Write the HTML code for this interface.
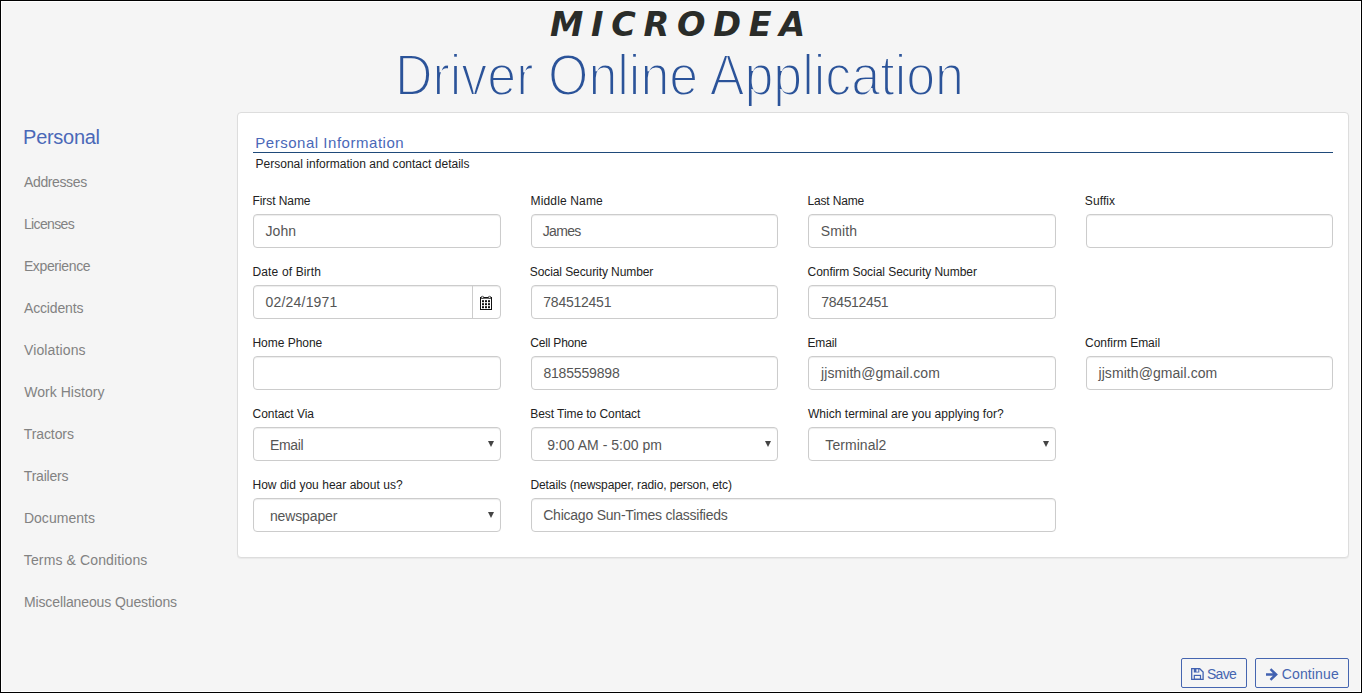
<!DOCTYPE html>
<html lang="en">
<head>
<meta charset="utf-8">
<title>Driver Online Application</title>
<style>
*{box-sizing:border-box}
html,body{margin:0;padding:0}
body{width:1362px;height:693px;overflow:hidden;position:relative;background:#f5f5f5;font-family:"Liberation Sans",sans-serif;color:#222}
.frame{position:absolute;left:0;top:0;width:1362px;height:693px;border:1px solid #000;box-shadow:inset 0 0 0 1px #fff;pointer-events:none;z-index:10}
.t{position:absolute;white-space:nowrap;line-height:1;display:block}
.logo{left:550px;top:7.5px;font-family:"DejaVu Sans","Liberation Sans",sans-serif;font-size:33.5px;font-weight:700;font-style:italic;letter-spacing:7.7px;color:#2a2c29}
.title{left:395.4px;top:48px;font-size:56.5px;color:#2b5399;-webkit-text-stroke:2px #f5f5f5;transform-origin:0 0;transform:scaleX(.9197)}
.nav{font-size:14px;color:#828282}
.nav.act{font-size:20px;color:#4a68b8}
.panel{position:absolute;left:237px;top:112px;width:1112px;height:446px;background:#fff;border:1px solid #ddd;border-radius:4px;box-shadow:0 1px 1px rgba(0,0,0,.05)}
.hr{position:absolute;left:253px;top:152px;width:1080px;height:1px;background:#1f4a7a}
.h{font-size:15px;color:#4a68b8}
.sub{font-size:12px;color:#222}
.lb{font-size:12px;color:#222}
.in{position:absolute;height:34px;background:#fff;border:1px solid #ccc;border-radius:4px;box-shadow:inset 0 1px 1px rgba(0,0,0,.075)}
.c1{left:253px;width:248px}.c2{left:531px;width:247px}.c3{left:808px;width:248px}.c4{left:1086px;width:247px}
.r1{top:214px}.r2{top:285px}.r3{top:356px}.r4{top:427px}.r5{top:498px}
.v{font-size:14px;color:#555}
.arr{position:absolute;width:0;height:0;border-left:3.5px solid transparent;border-right:3.5px solid transparent;border-top:6px solid #444}
.btn{position:absolute;top:658px;height:30px;border:1px solid #4565b0;border-radius:2px;background:#f5f5f5}
.bt{font-size:14px;color:#4565b0}
.ic{position:absolute;overflow:visible}
</style>
</head>
<body>
<div class="t logo" id="logo">MICRODEA</div>
<div class="t title" id="title">Driver Online Application</div>

<div class="panel"></div>
<div class="hr"></div>

<div class="in c1 r1"></div><div class="in c2 r1"></div><div class="in c3 r1"></div><div class="in c4 r1"></div>
<div class="in c1 r2"></div><div class="in c2 r2"></div><div class="in c3 r2"></div>
<div class="in c1 r3"></div><div class="in c2 r3"></div><div class="in c3 r3"></div><div class="in c4 r3"></div>
<div class="in c1 r4"></div><div class="in c2 r4"></div><div class="in c3 r4"></div>
<div class="in c1 r5"></div><div class="in c2 r5" style="width:525px"></div>

<!-- calendar addon -->
<div style="position:absolute;left:472px;top:286px;width:1px;height:32px;background:#ccc"></div>
<svg class="ic" style="left:480px;top:296px" width="13" height="15" viewBox="0 0 13 15">
<rect x="0.5" y="1.5" width="11" height="12" fill="#fff" stroke="#111" stroke-width="1"/>
<rect x="0.5" y="1" width="11" height="1.6" fill="#111"/>
<ellipse cx="2.4" cy="1.3" rx="1.3" ry="1" fill="#fff" stroke="#111" stroke-width=".7"/>
<ellipse cx="9.6" cy="1.3" rx="1.3" ry="1" fill="#fff" stroke="#111" stroke-width=".7"/>
<g fill="#111">
<rect x="2" y="4.2" width="2" height="2"/><rect x="5" y="4.2" width="2" height="2"/><rect x="8" y="4.2" width="2" height="2"/>
<rect x="2" y="7.2" width="2" height="2"/><rect x="5" y="7.2" width="2" height="2"/><rect x="8" y="7.2" width="2" height="2"/>
<rect x="2" y="10.2" width="2" height="2"/><rect x="5" y="10.2" width="2" height="2"/><rect x="8" y="10.2" width="2" height="2"/>
</g>
</svg>

<!-- select arrows -->
<div class="arr" style="left:487.5px;top:441px"></div>
<div class="arr" style="left:765px;top:441px"></div>
<div class="arr" style="left:1042.5px;top:441px"></div>
<div class="arr" style="left:487.5px;top:512px"></div>

<div class="btn" style="left:1181px;width:66px"></div>
<div class="btn" style="left:1255px;width:94px"></div>
<!-- floppy icon -->
<svg class="ic" style="left:1191.4px;top:668px" width="13" height="12" viewBox="0 0 13 12">
<path d="M0.7 0.7H8.7L12.1 4.1V11.3H0.7Z" fill="none" stroke="#4161b1" stroke-width="1.3" stroke-linejoin="miter"/>
<rect x="2.8" y="0.7" width="5.5" height="3.8" fill="#4161b1"/>
<rect x="5.4" y="1.3" width="1.9" height="2.4" fill="#f5f5f5"/>
<rect x="3.3" y="7.4" width="6.2" height="3.9" fill="none" stroke="#4161b1" stroke-width="1.2"/>
</svg>
<!-- arrow icon -->
<svg class="ic" style="left:1266px;top:668px" width="12" height="13" viewBox="0 0 12 13">
<path d="M0 5.2H6.9L3.7 2L5.3 0.2L11.9 6.45L5.3 12.7L3.7 10.9L6.9 7.7H0Z" fill="#4161b1"/>
</svg>

<div class="t nav act" id="n0" style="left:23.09px;top:127.00px;letter-spacing:-0.279px">Personal</div>
<div class="t nav" id="n1" style="left:24.03px;top:175.00px;letter-spacing:-0.375px">Addresses</div>
<div class="t nav" id="n2" style="left:23.91px;top:217.00px;letter-spacing:-0.630px">Licenses</div>
<div class="t nav" id="n3" style="left:23.91px;top:259.00px;letter-spacing:-0.374px">Experience</div>
<div class="t nav" id="n4" style="left:24.03px;top:301.00px;letter-spacing:-0.162px">Accidents</div>
<div class="t nav" id="n5" style="left:24.00px;top:343.00px;letter-spacing:0.124px">Violations</div>
<div class="t nav" id="n6" style="left:24.13px;top:385.00px;letter-spacing:0.049px">Work History</div>
<div class="t nav" id="n7" style="left:23.83px;top:427.00px;letter-spacing:-0.109px">Tractors</div>
<div class="t nav" id="n8" style="left:23.83px;top:469.00px;letter-spacing:-0.203px">Trailers</div>
<div class="t nav" id="n9" style="left:23.91px;top:511.00px;letter-spacing:0.025px">Documents</div>
<div class="t nav" id="n10" style="left:23.83px;top:553.00px;letter-spacing:0.125px">Terms &amp; Conditions</div>
<div class="t nav" id="n11" style="left:23.91px;top:595.00px;letter-spacing:-0.111px">Miscellaneous Questions</div>
<div class="t h" id="h" style="left:255.29px;top:135.00px;letter-spacing:0.524px">Personal Information</div>
<div class="t sub" id="sub" style="left:255.48px;top:158.00px;letter-spacing:0.016px">Personal information and contact details</div>
<div class="t lb" id="l11" style="left:252.48px;top:195.00px;letter-spacing:-0.068px">First Name</div>
<div class="t lb" id="l12" style="left:530.48px;top:195.00px;letter-spacing:0.162px">Middle Name</div>
<div class="t lb" id="l13" style="left:807.48px;top:195.00px;letter-spacing:-0.153px">Last Name</div>
<div class="t lb" id="l14" style="left:1084.80px;top:195.00px;letter-spacing:0.098px">Suffix</div>
<div class="t v" id="v11" style="left:265.40px;top:224.00px;letter-spacing:0.127px">John</div>
<div class="t v" id="v12" style="left:542.76px;top:224.00px;letter-spacing:-0.685px">James</div>
<div class="t v" id="v13" style="left:820.68px;top:224.00px;letter-spacing:0.145px">Smith</div>
<div class="t lb" id="l21" style="left:252.48px;top:266.00px;letter-spacing:0.146px">Date of Birth</div>
<div class="t lb" id="l22" style="left:529.80px;top:266.00px;letter-spacing:-0.088px">Social Security Number</div>
<div class="t lb" id="l23" style="left:807.55px;top:266.00px;letter-spacing:-0.047px">Confirm Social Security Number</div>
<div class="t v" id="v21" style="left:265.45px;top:295.00px;letter-spacing:0.211px">02/24/1971</div>
<div class="t v" id="v22" style="left:543.33px;top:295.00px;letter-spacing:-0.247px">784512451</div>
<div class="t v" id="v23" style="left:821.33px;top:295.00px;letter-spacing:-0.344px">784512451</div>
<div class="t lb" id="l31" style="left:252.48px;top:337.00px;letter-spacing:-0.026px">Home Phone</div>
<div class="t lb" id="l32" style="left:530.32px;top:337.00px;letter-spacing:-0.196px">Cell Phone</div>
<div class="t lb" id="l33" style="left:807.48px;top:337.00px;letter-spacing:-0.138px">Email</div>
<div class="t lb" id="l34" style="left:1085.08px;top:337.00px;letter-spacing:-0.030px">Confirm Email</div>
<div class="t v" id="v32" style="left:543.38px;top:366.00px;letter-spacing:-0.167px">8185559898</div>
<div class="t v" id="v33" style="left:821.06px;top:366.00px;letter-spacing:0.070px">jjsmith@gmail.com</div>
<div class="t v" id="v34" style="left:1098.48px;top:366.00px;letter-spacing:0.070px">jjsmith@gmail.com</div>
<div class="t lb" id="l41" style="left:252.56px;top:408.00px;letter-spacing:-0.042px">Contact Via</div>
<div class="t lb" id="l42" style="left:530.31px;top:408.00px;letter-spacing:-0.069px">Best Time to Contact</div>
<div class="t lb" id="l43" style="left:807.99px;top:408.00px;letter-spacing:0.024px">Which terminal are you applying for?</div>
<div class="t v" id="v41" style="left:269.91px;top:438.00px;letter-spacing:-0.330px">Email</div>
<div class="t v" id="v42" style="left:547.17px;top:438.00px;letter-spacing:0.028px">9:00 AM - 5:00 pm</div>
<div class="t v" id="v43" style="left:825.37px;top:438.00px;letter-spacing:0.045px">Terminal2</div>
<div class="t lb" id="l51" style="left:252.48px;top:479.00px;letter-spacing:0.028px">How did you hear about us?</div>
<div class="t lb" id="l52" style="left:530.48px;top:479.00px;letter-spacing:-0.106px">Details (newspaper, radio, person, etc)</div>
<div class="t v" id="v51" style="left:269.93px;top:509.00px;letter-spacing:-0.120px">newspaper</div>
<div class="t v" id="v52" style="left:543.20px;top:508.00px;letter-spacing:-0.223px">Chicago Sun-Times classifieds</div>
<div class="t bt" id="b1" style="left:1207.03px;top:667.00px;letter-spacing:-0.753px">Save</div>
<div class="t bt" id="b2" style="left:1281.81px;top:667.00px;letter-spacing:0.123px">Continue</div>

<div class="frame"></div>
</body>
</html>
